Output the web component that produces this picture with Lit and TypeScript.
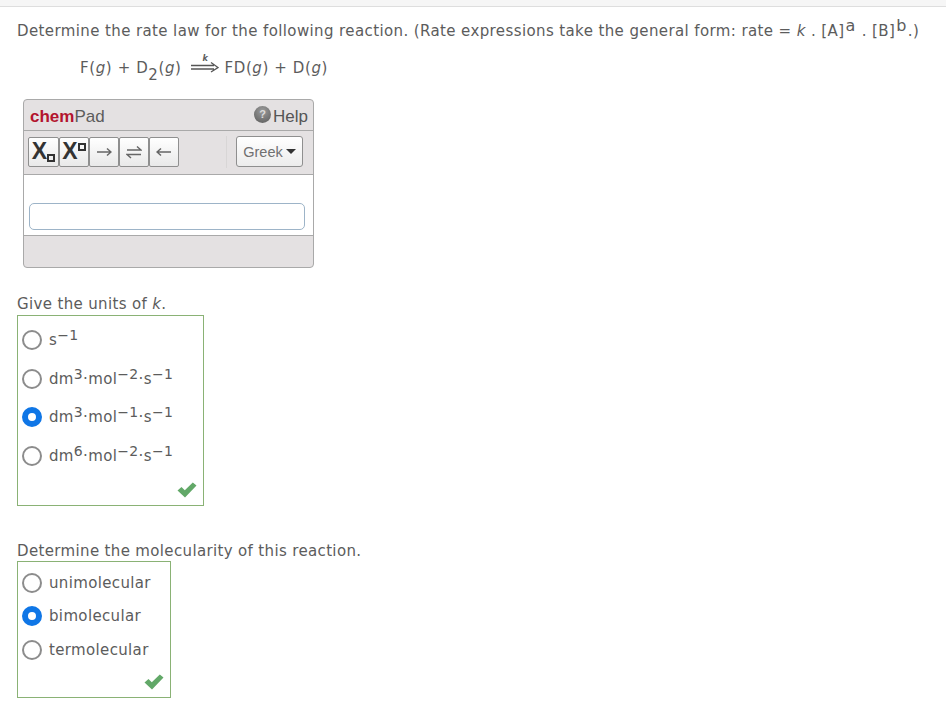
import { LitElement, html, css, svg } from "lit";
import { customElement } from "lit/decorators.js";

const check = html`<svg class="check" width="20" height="16" viewBox="0 0 20 16"><path d="M0.5 8.5 L4.5 5 L7.8 8.2 L15.8 0.6 L19.5 3.4 L8 15.5 Z" fill="#62a868"/></svg>`;

function arrow(kind: string) {
  const parts: Record<string, unknown> = {
    right: svg`<path d="M1 7 H15 M11 3.5 L15 7 L11 10.5" />`,
    left: svg`<path d="M15 7 H1 M5 3.5 L1 7 L5 10.5" />`,
    eq: svg`<path d="M1 5 H15 L11 1.5 M15 9.5 H1 L5 13" />`,
  };
  return html`<svg class="arrow" width="16" height="14" viewBox="0 0 16 14">${parts[kind]}</svg>`;
}

@customElement("app-root")
export class AppRoot extends LitElement {
  static styles = css`
    :host {
      display: block;
      width: 946px;
      height: 710px;
      overflow: hidden;
      background: #fff;
      color: #5c5c5c;
      font-family: "DejaVu Sans", Verdana, sans-serif;
      font-size: 15px;
      letter-spacing: 0.35px;
      box-sizing: border-box;
    }
    .topbar { height: 6px; background: #f6f6f6; border-bottom: 1px solid #dedede; }
    .content { padding: 14px 0 0 17px; display: flex; flex-direction: column; align-items: flex-start; }
    .q { height: 20px; line-height: 20px; white-space: nowrap; letter-spacing: 0.39px; }
    .q sup { font-size: 16px; margin: 0 1px; }
    sup, sub { font-size: 14px; line-height: 0; }
    sup { vertical-align: 5.5px; }
    sub { vertical-align: -7px; font-size: 15px; }
    .eq { margin: 17px 0 0 63px; height: 20px; line-height: 20px; display: flex; align-items: center; white-space: pre; letter-spacing: 0.6px; }
    .rxn { position: relative; display: inline-flex; margin: 0 6px 0 9px; width: 28px; height: 14px; }
    .rxn i { position: absolute; left: 12px; top: -6px; font-size: 8px; line-height: 8px; font-weight: bold; }
    .rxn svg { display: block; }
    .pad {
      margin: 21px 0 0 6px; width: 291px; height: 169px; box-sizing: border-box;
      border: 1px solid #a9a9a9; border-radius: 4px; background: #e4e1e2; letter-spacing: 0;
      display: flex; flex-direction: column; font-family: "Liberation Sans", Arial, sans-serif; font-size: 17px;
    }
    .pad-head { height: 31px; flex: none; display: flex; align-items: center; justify-content: space-between; padding: 3px 5px 0 6px; box-sizing: border-box; border-bottom: 1px solid #a9a9a9; }
    .pad-head b { color: #b3142e; }
    .help { display: flex; align-items: center; gap: 2px; color: #555; }
    .help-ic { width: 17px; height: 17px; margin-top: -5px; border-radius: 50%; background: radial-gradient(circle at 50% 30%, #9c9c9c, #5a5a5a); color: #dcdcdc; font-size: 11px; font-weight: bold; display: flex; align-items: center; justify-content: center; }
    .tools { height: 44px; flex: none; display: flex; align-items: center; padding: 0 0 2px 4px; box-sizing: border-box; border-bottom: 1px solid #a9a9a9; }
    .tb { width: 30px; height: 30px; box-sizing: border-box; border: 1px solid #8f8f8f; border-radius: 2px; background: linear-gradient(#fff, #e9e9e9); display: flex; align-items: center; justify-content: center; color: #444; padding: 0; }
    .tb.x { width: 31px; font-weight: bold; font-size: 23px; color: #333; }
    .tb.x.n { width: 30px; }
    .box { display: block; width: 8px; height: 8px; box-sizing: border-box; border: 2px solid #333; }
    .box.lo { margin-top: 13px; }
    .box.hi { margin-bottom: 10px; }
    .arrow { fill: none; stroke: #666; stroke-width: 1.5; }
    .sep { width: 1px; height: 32px; background: #d8d6d6; margin: 0 9px 0 47px; }
    .greek { width: 67px; height: 31px; box-sizing: border-box; border: 1px solid #8f8f8f; border-radius: 3px; background: linear-gradient(#fff, #ececec); font-size: 14.5px; color: #707070; display: flex; align-items: center; justify-content: center; gap: 3px; }
    .caret { width: 0; height: 0; border-left: 5px solid transparent; border-right: 5px solid transparent; border-top: 5px solid #333; }
    .edit { flex: none; height: 61px; background: #fff; padding: 28px 8px 0 5px; box-sizing: border-box; border-bottom: 1px solid #a9a9a9; }
    .field { height: 27px; box-sizing: border-box; border: 1px solid #9db4c8; border-radius: 5px; background: #fff; }
    .label { height: 20px; line-height: 20px; white-space: nowrap; }
    .l1 { margin-top: 26px; }
    .l2 { margin-top: 35px; }
    .group { position: relative; box-sizing: border-box; border: 1px solid #8ab275; padding-left: 4px; display: flex; flex-direction: column; }
    .g1 { margin-top: 1px; width: 187px; height: 191px; padding-top: 5px; }
    .g2 { margin-top: 0; width: 154px; height: 137px; padding-top: 4px; }
    .opt { display: flex; align-items: center; gap: 7px; white-space: nowrap; }
    .g1 .opt { height: 38.5px; }
    .g2 .opt { height: 33.5px; }
    .radio { flex: none; width: 20px; height: 20px; box-sizing: border-box; border-radius: 50%; border: 2px solid #8c8c8c; background: #fff; }
    .radio.on { border: 6px solid #0f76e6; }
    .check { position: absolute; right: 6px; bottom: 7px; }
    em { font-style: italic; }
  `;

  private opt(on: boolean, body: unknown) {
    return html`<div class="opt"><span class="radio ${on ? "on" : ""}"></span><span>${body}</span></div>`;
  }

  render() {
    return html`
      <div class="topbar"></div>
      <div class="content">
        <div class="q">Determine the rate law for the following reaction. (Rate expressions take the general form: rate = <em>k</em> . [A]<sup>a</sup> . [B]<sup>b</sup>.)</div>
        <div class="eq"><span>F(<em>g</em>) + D<sub>2</sub>(<em>g</em>)</span><span class="rxn"><i>k</i><svg width="28" height="14" viewBox="0 0 28 14" fill="none" stroke="#555" stroke-width="1.3"><path d="M0 4.5 H23 M0 8 H23 M20 1.5 L27 6.5 L20 11" /></svg></span><span>FD(<em>g</em>) + D(<em>g</em>)</span></div>
        <div class="pad">
          <div class="pad-head"><span><b>chem</b>Pad</span><span class="help"><span class="help-ic">?</span>Help</span></div>
          <div class="tools">
            <span class="tb x">X<span class="box lo"></span></span>
            <span class="tb x n">X<span class="box hi"></span></span>
            <span class="tb">${arrow("right")}</span>
            <span class="tb">${arrow("eq")}</span>
            <span class="tb">${arrow("left")}</span>
            <span class="sep"></span>
            <span class="greek">Greek<span class="caret"></span></span>
          </div>
          <div class="edit"><div class="field"></div></div>
        </div>
        <div class="label l1">Give the units of <em>k</em>.</div>
        <div class="group g1">
          ${this.opt(false, html`s<sup>−1</sup>`)}
          ${this.opt(false, html`dm<sup>3</sup>·mol<sup>−2</sup>·s<sup>−1</sup>`)}
          ${this.opt(true, html`dm<sup>3</sup>·mol<sup>−1</sup>·s<sup>−1</sup>`)}
          ${this.opt(false, html`dm<sup>6</sup>·mol<sup>−2</sup>·s<sup>−1</sup>`)}
          ${check}
        </div>
        <div class="label l2">Determine the molecularity of this reaction.</div>
        <div class="group g2">
          ${this.opt(false, "unimolecular")}
          ${this.opt(true, "bimolecular")}
          ${this.opt(false, "termolecular")}
          ${check}
        </div>
      </div>
    `;
  }
}
